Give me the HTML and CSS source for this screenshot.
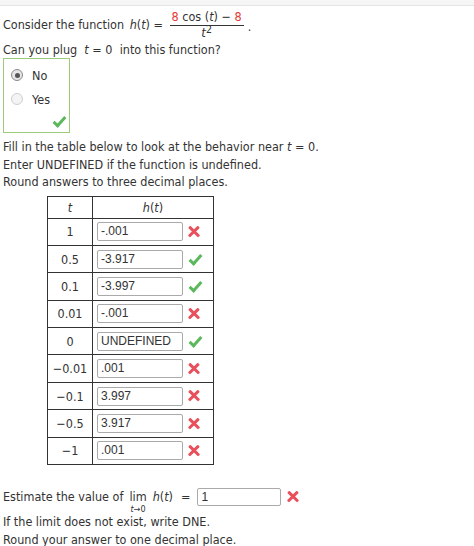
FILE: index.html
```html
<!DOCTYPE html>
<html>
<head>
<meta charset="utf-8">
<link rel="stylesheet" href="styles.css">
</head>
<body>
<div class="topbar"></div>
<div class="content">
  <div class="line q1">
    <span>Consider the function&nbsp;</span><span class="math"><i>h</i>(<i>t</i>)&nbsp;=&nbsp;</span>
    <span class="frac"><span class="num"><span class="red">8</span> cos (<i>t</i>) − <span class="red">8</span></span><span class="den"><i>t</i><sup>2</sup></span></span>
    <span class="dot">.</span>
  </div>
  <div class="line q2">Can you plug&nbsp; <i>t</i> = 0&nbsp; into this function?</div>
  <div class="choice">
    <div class="opt"><span class="radio on"></span><span>No</span></div>
    <div class="opt"><span class="radio"></span><span>Yes</span></div>
    <div class="boxcheck"><span class="ok"></span></div>
  </div>
  <div class="para">
    <div>Fill in the table below to look at the behavior near <i>t</i> = 0.</div>
    <div>Enter UNDEFINED if the function is undefined.</div>
    <div>Round answers to three decimal places.</div>
  </div>
  <table class="tbl">
    <tr><th class="c1"><i>t</i></th><th><i>h</i>(<i>t</i>)</th></tr>
    <tr><td class="c1">1</td><td><div class="cell"><span class="inp">-.001</span><span class="x"></span></div></td></tr>
    <tr><td class="c1">0.5</td><td><div class="cell"><span class="inp">-3.917</span><span class="ok"></span></div></td></tr>
    <tr><td class="c1">0.1</td><td><div class="cell"><span class="inp">-3.997</span><span class="ok"></span></div></td></tr>
    <tr><td class="c1">0.01</td><td><div class="cell"><span class="inp">-.001</span><span class="x"></span></div></td></tr>
    <tr><td class="c1">0</td><td><div class="cell"><span class="inp">UNDEFINED</span><span class="ok"></span></div></td></tr>
    <tr><td class="c1">−0.01</td><td><div class="cell"><span class="inp">.001</span><span class="x"></span></div></td></tr>
    <tr><td class="c1">−0.1</td><td><div class="cell"><span class="inp">3.997</span><span class="x"></span></div></td></tr>
    <tr><td class="c1">−0.5</td><td><div class="cell"><span class="inp">3.917</span><span class="x"></span></div></td></tr>
    <tr><td class="c1">−1</td><td><div class="cell"><span class="inp">.001</span><span class="x"></span></div></td></tr>
  </table>
  <div class="est">
    <span class="lbl">Estimate the value of</span>
    <span class="lim"><span class="limtop">lim</span><span class="limsub"><i>t</i>→0</span></span>
    <span class="lbl hfn"><i>h</i>(<i>t</i>)</span>
    <span class="lbl eq">=</span>
    <span class="inp wide">1</span><span class="x"></span>
  </div>
  <div class="para2">
    <div>If the limit does not exist, write DNE.</div>
    <div>Round your answer to one decimal place.</div>
  </div>
</div>
</body>
</html>
```
FILE: styles.css
```css
html, body { margin: 0; padding: 0; background: #fff; }
body {
  font-family: "DejaVu Sans Condensed", "DejaVu Sans", Verdana, sans-serif;
  font-size: 12.5px;
  color: #333;
}
.topbar {
  height: 5px;
  background: #f6f6f6;
  border-bottom: 1px solid #e4e4e4;
}
.content { padding: 0 3px; }
i { font-style: italic; }
.q1 {
  display: flex;
  align-items: center;
  height: 36px;
}
.math { white-space: nowrap; margin-left: 2px; }
.frac {
  display: inline-flex;
  flex-direction: column;
  align-items: center;
  margin-left: 3px;
}
.num {
  padding: 0 2px 1px;
  border-bottom: 1px solid #333;
  line-height: 15px;
}
.den { line-height: 14px; font-size: 13px; }
.den sup { font-size: 10.5px; vertical-align: 4px; line-height: 0; }
.red { color: #e53935; }
.dot { margin-left: 4px; margin-top: 4px; }
.q2 { height: 16px; line-height: 16px; }
.choice {
  width: 65px;
  height: 73px;
  border: 1px solid #9ccc7a;
  display: flex;
  flex-direction: column;
}
.opt {
  display: flex;
  align-items: center;
  height: 24px;
  padding-left: 7px;
}
.opt:first-child { margin-top: 4px; }
.radio {
  width: 12px;
  height: 12px;
  border-radius: 50%;
  border: 1px solid #cfcfcf;
  background: #f4f4f4;
  margin-right: 9px;
  box-sizing: border-box;
  position: relative;
}
.radio.on { border-color: #8a8a8a; background: #e6e6e6; }
.radio.on::after {
  content: "";
  position: absolute;
  left: 2.5px; top: 2.5px;
  width: 5px; height: 5px;
  border-radius: 50%;
  background: #555;
}
.boxcheck {
  display: flex;
  justify-content: flex-end;
  padding-right: 5px;
  margin-top: 4px;
}
.para { margin-top: 5px; line-height: 17.5px; }
.tbl {
  border-collapse: collapse;
  margin-left: 44px;
  margin-top: 5px;
  width: 167px;
}
.tbl th, .tbl td {
  border: 1px solid #333;
  padding: 0;
  font-weight: normal;
  height: 26.4px;
  text-align: center;
}
.tbl th { height: 21px; }
.tbl .c1 { width: 44px; }
.cell {
  display: flex;
  align-items: center;
  padding-left: 4px;
}
.inp {
  display: inline-block;
  box-sizing: border-box;
  width: 86px;
  height: 19px;
  border: 1px solid #aaa;
  border-radius: 2px;
  font-family: "Liberation Sans", Arial, sans-serif;
  font-size: 12px;
  line-height: 17px;
  padding-left: 3px;
  text-align: left;
  color: #333;
  background: #fff;
}
.x, .ok {
  display: inline-block;
  width: 12px;
  height: 12px;
  margin-left: 5px;
  position: relative;
  flex: none;
}
.x::before, .x::after {
  content: "";
  position: absolute;
  left: -1px; top: 4.3px;
  width: 14px; height: 3.4px;
  background: #e8505b;
  border-radius: 1px;
  transform: rotate(45deg);
}
.x::after { transform: rotate(-45deg); }
.ok::before {
  content: "";
  position: absolute;
  left: 4px; top: -1px;
  width: 4px; height: 10px;
  border-right: 3.5px solid #5cb85c;
  border-bottom: 3px solid #5cb85c;
  transform: rotate(42deg);
}
.est {
  display: flex;
  align-items: flex-start;
  margin-top: 22px;
  height: 26px;
}
.est .lbl { line-height: 18px; margin-top: 1px; white-space: pre; }
.lim {
  display: inline-flex;
  flex-direction: column;
  align-items: center;
  margin-left: 6px;
}
.limtop { line-height: 17px; margin-top: 1px; }
.limsub { font-size: 9px; line-height: 8px; }
.est .hfn { margin-left: 6px; }
.est .eq { margin-left: 8px; margin-right: 7px; }
.inp.wide { width: 84px; margin-top: 1px; height: 18px; }
.est .x { margin-top: 4px; margin-left: 6px; }
.para2 { line-height: 17.5px; }
```
